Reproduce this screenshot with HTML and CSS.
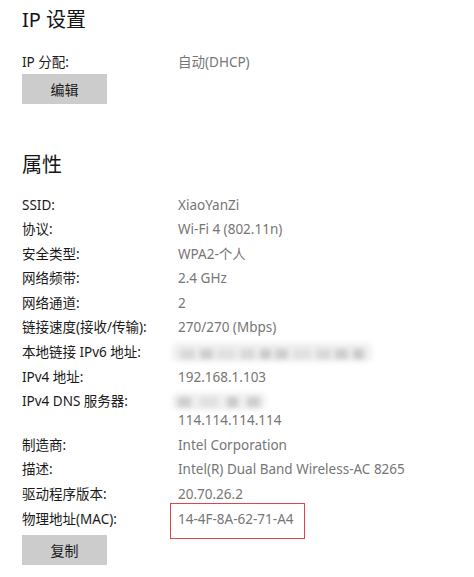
FILE: index.html
```html
<!DOCTYPE html>
<html lang="zh-CN">
<head>
<meta charset="utf-8">
<title>IP 设置</title>
<link rel="stylesheet" href="styles.css">
</head>
<body>
<main class="page">
  <h2 class="title title-ip">IP 设置</h2>
  <div class="props props-ip">
    <div class="label">IP 分配:</div>
    <div class="value">自动(DHCP)</div>
  </div>
  <button class="btn btn-edit">编辑</button>

  <h2 class="title title-props">属性</h2>
  <div class="props">
    <div class="label">SSID:</div>
    <div class="value">XiaoYanZi</div>
    <div class="label">协议:</div>
    <div class="value">Wi-Fi 4 (802.11n)</div>
    <div class="label">安全类型:</div>
    <div class="value">WPA2-个人</div>
    <div class="label">网络频带:</div>
    <div class="value">2.4 GHz</div>
    <div class="label">网络通道:</div>
    <div class="value">2</div>
    <div class="label">链接速度(接收/传输):</div>
    <div class="value">270/270 (Mbps)</div>
    <div class="label">本地链接 IPv6 地址:</div>
    <div class="value"><span class="blur blur-v6"><i class="b1"></i><i class="b2"></i><i class="b3"></i><i class="b1"></i><i class="b4"></i><i class="b2"></i><i class="b3"></i><i class="b1"></i><i class="b2"></i><i class="b4"></i></span></div>
    <div class="label">IPv4 地址:</div>
    <div class="value">192.168.1.103</div>
    <div class="label">IPv4 DNS 服务器:</div>
    <div class="value"><span class="blur blur-dns"><i class="b2"></i><i class="b3"></i><i class="b4"></i><i class="b2"></i></span><br>114.114.114.114</div>
    <div class="label">制造商:</div>
    <div class="value">Intel Corporation</div>
    <div class="label">描述:</div>
    <div class="value">Intel(R) Dual Band Wireless-AC 8265</div>
    <div class="label">驱动程序版本:</div>
    <div class="value">20.70.26.2</div>
    <div class="label">物理地址(MAC):</div>
    <div class="value"><span class="mac">14-4F-8A-62-71-A4</span></div>
  </div>
  <button class="btn btn-copy">复制</button>
</main>
</body>
</html>
```

FILE: styles.css
```css
html, body {
  margin: 0;
  padding: 0;
  background: #ffffff;
}

.page {
  padding: 0 0 0 22px;
  font-family: "Noto Sans", "Noto Sans CJK SC", sans-serif;
  font-size: 13.5px;
  color: #1a1a1a;
}

.title {
  font-size: 20px;
  line-height: 28px;
  font-weight: normal;
  color: #141414;
  margin: 0;
}

.title-ip {
  margin-top: 6px;
}

.title-props {
  margin-top: 47px;
  margin-bottom: 16.5px;
}

.props {
  display: grid;
  grid-template-columns: 156px 1fr;
  row-gap: 5.6px;
  line-height: 19px;
}

.props-ip {
  margin-top: 18.5px;
}

.label {
  color: #1a1a1a;
  white-space: nowrap;
}

.value {
  color: #767676;
  white-space: nowrap;
}

.btn {
  display: block;
  width: 85px;
  height: 30px;
  border: none;
  padding: 0;
  background: #cccccc;
  color: #1a1a1a;
  font-family: "Noto Sans CJK SC", sans-serif;
  font-size: 14px;
}

.btn-edit {
  margin-top: 2.5px;
}

.btn-copy {
  margin-top: 6.5px;
}

.blur {
  display: inline-flex;
  align-items: flex-start;
  justify-content: space-between;
  vertical-align: top;
  background: #f0f0f0;
  filter: blur(2.4px);
  margin-left: -6px;
  border-radius: 6px;
  box-sizing: border-box;
}

.blur i {
  display: block;
  height: 10px;
  margin-top: 6px;
}

.blur-v6 {
  width: 200px;
  height: 19px;
  padding: 0 8px;
}

.blur-dns {
  width: 94px;
  height: 17px;
  padding: 0 6px;
  margin-top: 1px;
}

.blur-dns i {
  margin-top: 4px;
  height: 10px;
}

.b1 { width: 15px; background: #d8d8d8; }
.b2 { width: 13px; background: #cdcdcd; }
.b3 { width: 18px; background: #e0e0e0; }
.b4 { width: 11px; background: #c9c9c9; }

.mac {
  display: inline-block;
  position: relative;
}

.mac::after {
  content: "";
  position: absolute;
  left: -8px;
  right: -11px;
  top: -7px;
  bottom: -10px;
  border: 1.5px solid #de4548;
}
```
